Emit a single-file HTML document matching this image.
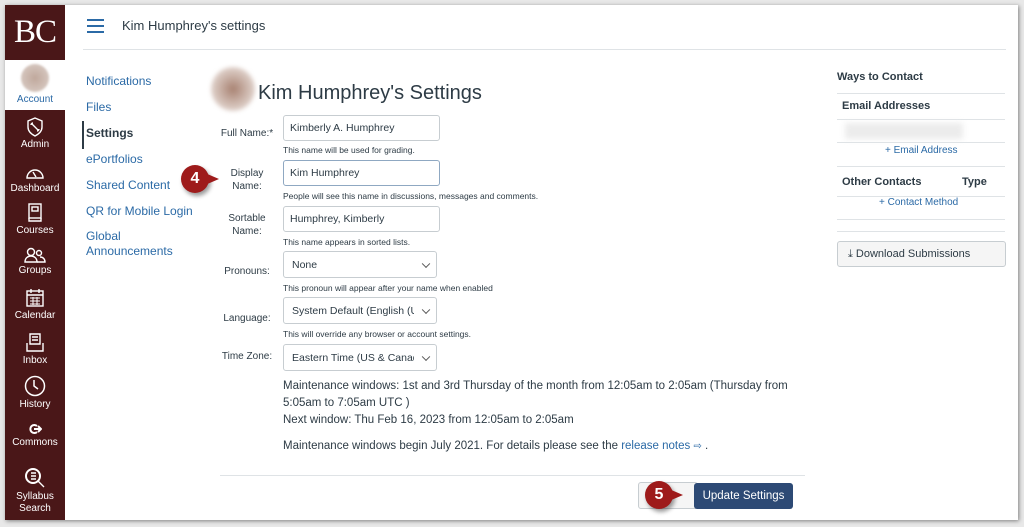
<!DOCTYPE html>
<html><head><meta charset="utf-8">
<style>
*{margin:0;padding:0;box-sizing:border-box}
body{width:1024px;height:527px;background:#e8e8e8;font-family:"Liberation Sans",sans-serif;position:relative;overflow:hidden;color:#2d3b45}
.frame{position:absolute;left:5px;top:5px;width:1013px;height:515px;background:#fff;box-shadow:1px 1px 4px rgba(0,0,0,.45);overflow:hidden}
.side{position:absolute;left:0;top:0;width:60px;height:515px;background:#4a1718}
.logo{position:absolute;left:0;top:0;width:60px;height:55px;color:#fff;font-family:"Liberation Serif",serif;font-size:33px;text-align:center;line-height:55px;letter-spacing:-1px}
.acct{position:absolute;left:0;top:55px;width:60px;height:50px;background:#fff;text-align:center}
.av{width:28px;height:28px;border-radius:50%;background:radial-gradient(#c0a89c,#ddd2cc);margin:4px auto 0;filter:blur(1px)}
.acct span{font-size:10px;color:#2b6aa6;display:block;margin-top:2px}
.it{position:absolute;left:0;width:60px;text-align:center;color:#fff;font-size:10px;line-height:12px}
.it svg{display:block;margin:0 auto 2px}
.a{position:absolute;white-space:nowrap}
.link{color:#2b6aa6}
.nav{font-size:12px}
.lbl{font-size:10px;text-align:center;color:#2d3b45}
.inp{position:absolute;border:1px solid #c7cdd1;border-radius:3px;background:#fff;font-size:10.5px;padding-left:6px;display:flex;align-items:center;white-space:nowrap}
.sel span{display:block;width:122px;overflow:hidden}
.sel::after{content:"";position:absolute;right:7px;top:50%;width:5px;height:5px;border-right:1px solid #555;border-bottom:1px solid #555;transform:translateY(-70%) rotate(45deg)}
.help{font-size:8.5px;color:#2d3b45}
.txt{font-size:11.5px;color:#2d3b45}
.hr{position:absolute;height:1px;background:#dfe3e6}
.badge{position:absolute;width:28px;height:28px;border-radius:50%;background:#9e1b1b;color:#fff;font-weight:bold;font-size:16px;text-align:center;line-height:28px;box-shadow:2px 3px 4px rgba(0,0,0,.4)}
.badge::after{content:"";position:absolute;right:-10px;top:8px;border-left:14px solid #9e1b1b;border-top:6px solid transparent;border-bottom:6px solid transparent}
</style></head><body>
<div class="frame">
<div class="side">
<div class="logo">BC</div>
<div class="acct"><div class="av"></div><span>Account</span></div>
<div class="it" style="top:112px"><svg width="20" height="20" viewBox="0 0 20 20" fill="none" stroke="#fff" stroke-width="1.4"><path d="M10 1l7 3v6c0 4-3 7-7 9-4-2-7-5-7-9V4z"/><path d="M7 7l6 6M8 6a2 2 0 0 0-2 2M12 14a2 2 0 0 0 2-2"/></svg>Admin</div>
<div class="it" style="top:158px"><svg width="20" height="18" viewBox="0 0 20 18" fill="none" stroke="#fff" stroke-width="1.4"><path d="M2 15a8 8 0 1 1 16 0z"/><path d="M8 9l3 5"/></svg>Dashboard</div>
<div class="it" style="top:198px"><svg width="18" height="20" viewBox="0 0 18 20" fill="none" stroke="#fff" stroke-width="1.4"><rect x="3" y="1" width="12" height="14"/><rect x="6" y="4" width="6" height="4"/><path d="M3 15v3h12v-3"/></svg>Courses</div>
<div class="it" style="top:242px"><svg width="22" height="16" viewBox="0 0 22 16" fill="none" stroke="#fff" stroke-width="1.4"><circle cx="7" cy="5" r="3.5"/><path d="M1 15c0-4 3-6 6-6s6 2 6 6z"/><circle cx="15" cy="6" r="2.5"/><path d="M13 15h8c0-3-2-5-5-5"/></svg>Groups</div>
<div class="it" style="top:283px"><svg width="20" height="20" viewBox="0 0 20 20" fill="none" stroke="#fff" stroke-width="1.4"><rect x="2" y="3" width="16" height="15"/><path d="M2 7h16M6 1v4M14 1v4"/><path d="M5 10h10M5 13h10M5 16h10M8 9v8M12 9v8" stroke-width="1"/></svg>Calendar</div>
<div class="it" style="top:328px"><svg width="20" height="20" viewBox="0 0 20 20" fill="none" stroke="#fff" stroke-width="1.4"><path d="M5 1h10v10H5zM7 4h6M7 7h6"/><path d="M2 10v8h16v-8"/></svg>Inbox</div>
<div class="it" style="top:370px"><svg width="22" height="22" viewBox="0 0 22 22" fill="none" stroke="#fff" stroke-width="1.5"><circle cx="11" cy="11" r="9.5"/><path d="M10 5v6l4 3"/></svg>History</div>
<div class="it" style="top:418px"><svg width="14" height="12" viewBox="0 0 14 12" fill="none" stroke="#fff" stroke-width="2"><path d="M9 3a4 4 0 1 0 0 6M6 6h7M10 3l3 3-3 3"/></svg>Commons</div>
<div class="it" style="top:462px"><svg width="22" height="22" viewBox="0 0 22 22" fill="none" stroke="#fff" stroke-width="2"><circle cx="9" cy="9" r="7"/><path d="M14 14l6 6M7 6h5M7 9h5M7 12h5" stroke-width="1.4"/></svg>Syllabus<br>Search</div>
</div>

<div class="a" style="left:82px;top:14px"><div style="width:17px;height:2px;background:#2b6aa6;margin-bottom:4px"></div><div style="width:17px;height:2px;background:#2b6aa6;margin-bottom:4px"></div><div style="width:17px;height:2px;background:#2b6aa6"></div></div>
<div class="a" style="left:117px;top:13px;font-size:13px">Kim Humphrey's settings</div>
<div class="hr" style="left:78px;top:44px;width:923px"></div>

<div class="a nav link" style="left:81px;top:69px">Notifications</div>
<div class="a nav link" style="left:81px;top:95px">Files</div>
<div class="a" style="left:77px;top:116px;width:2px;height:28px;background:#2d3b45"></div>
<div class="a nav" style="left:81px;top:121px;font-weight:bold">Settings</div>
<div class="a nav link" style="left:81px;top:147px">ePortfolios</div>
<div class="a nav link" style="left:81px;top:173px">Shared Content</div>
<div class="a nav link" style="left:81px;top:199px">QR for Mobile Login</div>
<div class="a nav link" style="left:81px;top:224px;line-height:15px">Global<br>Announcements</div>

<div class="a" style="left:206px;top:62px;width:44px;height:44px;border-radius:50%;background:radial-gradient(#a88272,#e4d8d2 75%,#fff);filter:blur(2px)"></div>
<div class="a" style="left:253px;top:77px;font-size:20px">Kim Humphrey's Settings</div>

<div class="a lbl" style="left:212px;top:123px;width:60px">Full Name:*</div>
<div class="inp" style="left:278px;top:110px;width:157px;height:26px">Kimberly A. Humphrey</div>
<div class="a help" style="left:278px;top:140px">This name will be used for grading.</div>

<div class="badge" style="left:176px;top:160px">4</div>
<div class="a lbl" style="left:212px;top:162px;width:60px;line-height:13px">Display<br>Name:</div>
<div class="inp" style="left:278px;top:155px;width:157px;height:26px;border-color:#8fa8c2">Kim Humphrey</div>
<div class="a help" style="left:278px;top:186px">People will see this name in discussions, messages and comments.</div>

<div class="a lbl" style="left:212px;top:207px;width:60px;line-height:13px">Sortable<br>Name:</div>
<div class="inp" style="left:278px;top:201px;width:157px;height:26px">Humphrey, Kimberly</div>
<div class="a help" style="left:278px;top:232px">This name appears in sorted lists.</div>

<div class="a lbl" style="left:212px;top:261px;width:60px">Pronouns:</div>
<div class="inp sel" style="left:278px;top:246px;width:154px;height:27px;padding-left:8px"><span>None</span></div>
<div class="a help" style="left:278px;top:278px">This pronoun will appear after your name when enabled</div>

<div class="a lbl" style="left:212px;top:308px;width:60px">Language:</div>
<div class="inp sel" style="left:278px;top:292px;width:154px;height:27px;padding-left:8px"><span>System Default (English (United States))</span></div>
<div class="a help" style="left:278px;top:324px">This will override any browser or account settings.</div>

<div class="a lbl" style="left:212px;top:346px;width:60px">Time Zone:</div>
<div class="inp sel" style="left:278px;top:339px;width:154px;height:27px;padding-left:8px"><span>Eastern Time (US &amp; Canada) (-05:00)</span></div>

<div class="a txt" style="left:278px;top:373px;line-height:17px">Maintenance windows: 1st and 3rd Thursday of the month from 12:05am to 2:05am (Thursday from<br>5:05am to 7:05am UTC )<br>Next window: Thu Feb 16, 2023 from 12:05am to 2:05am</div>
<div class="a txt" style="left:278px;top:435px">Maintenance windows begin July 2021. For details please see the <span class="link">release notes</span> <span class="link" style="font-size:10px">&#8680;</span> .</div>

<div class="hr" style="left:215px;top:470px;width:585px"></div>
<div class="a" style="left:633px;top:477px;width:60px;height:27px;background:#f5f5f5;border:1px solid #c7cdd1;border-radius:3px"></div>
<div class="a" style="left:689px;top:478px;width:99px;height:26px;background:#2d4a75;border-radius:3px;color:#fff;font-size:11.5px;text-align:center;line-height:26px">Update Settings</div>
<div class="badge" style="left:640px;top:476px">5</div>

<div class="a" style="left:832px;top:66px;font-size:11px;font-weight:bold">Ways to Contact</div>
<div class="hr" style="left:832px;top:88px;width:168px"></div>
<div class="a" style="left:837px;top:95px;font-size:11px;font-weight:bold">Email Addresses</div>
<div class="hr" style="left:832px;top:114px;width:168px"></div>
<div class="a" style="left:840px;top:118px;width:118px;height:16px;background:#ececec;filter:blur(3px)"></div>
<div class="hr" style="left:832px;top:137px;width:168px"></div>
<div class="a link" style="left:880px;top:140px;font-size:10px">+ Email Address</div>
<div class="hr" style="left:832px;top:161px;width:168px"></div>
<div class="a" style="left:837px;top:171px;font-size:11px;font-weight:bold">Other Contacts</div>
<div class="a" style="left:957px;top:171px;font-size:11px;font-weight:bold">Type</div>
<div class="hr" style="left:832px;top:191px;width:168px"></div>
<div class="a link" style="left:874px;top:192px;font-size:10px">+ Contact Method</div>
<div class="hr" style="left:832px;top:214px;width:168px"></div>
<div class="hr" style="left:832px;top:226px;width:168px"></div>
<div class="a" style="left:832px;top:236px;width:169px;height:26px;background:#f5f5f5;border:1px solid #c7cdd1;border-radius:3px;font-size:11px;line-height:24px;padding-left:10px">&#10515; Download Submissions</div>
</div>
</body></html>
